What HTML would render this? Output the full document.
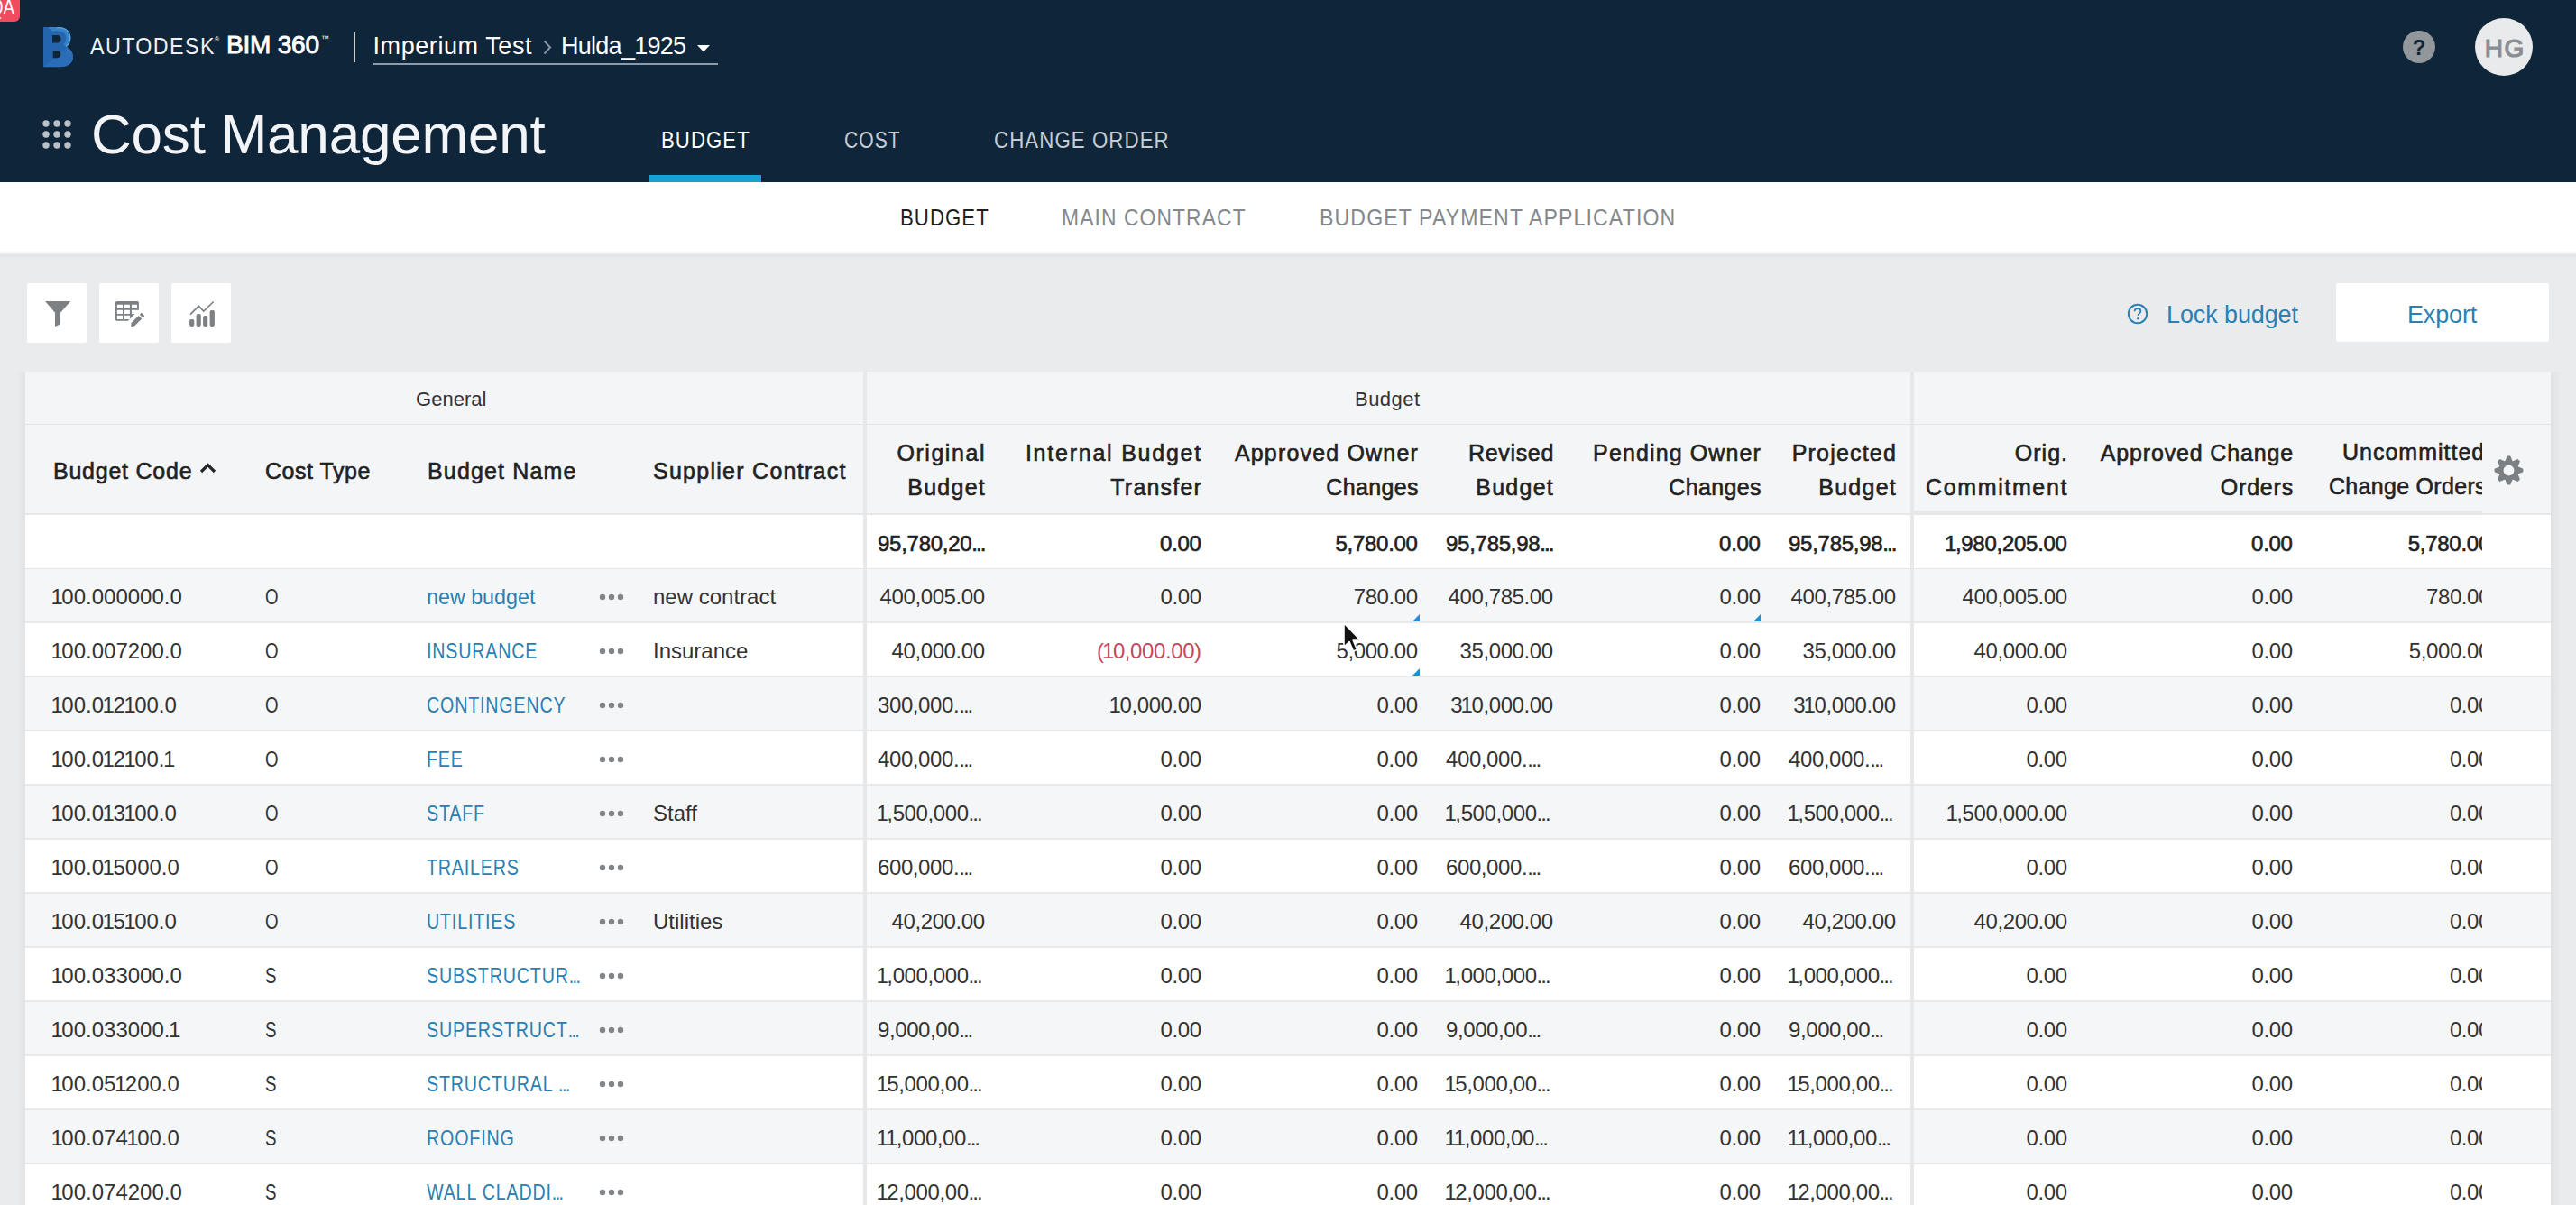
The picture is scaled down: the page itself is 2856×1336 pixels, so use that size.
<!DOCTYPE html>
<html><head><meta charset="utf-8">
<style>
html,body{margin:0;padding:0;}
body{width:2856px;height:1336px;overflow:hidden;position:relative;background:#e9ebed;font-family:"Liberation Sans",sans-serif;}
.t{position:absolute;line-height:1;white-space:nowrap;}
.r{position:absolute;}
svg{position:absolute;}
.o{margin-left:-1.5px;letter-spacing:-1.5px;}
.e{letter-spacing:-2.0px;}
.n{letter-spacing:-0.4px;}
.nb{letter-spacing:-0.27px;}
.sx{display:inline-block;transform-origin:0 0;}
</style></head><body>
<div class="r" style="left:0px;top:0px;width:2856px;height:202px;background:#0f2539;"></div>
<div class="r" style="left:0;top:0;width:22px;height:24px;background:#f24b60;border-bottom-right-radius:6px;overflow:hidden;"><div class="t" style="top:-4.02px;font-size:24px;color:#fff;left:-10.7px;"><span class="sx" style="transform:scaleX(0.78)">QA</span></div>
</div>
<svg style="left:47.9px;top:29.8px" width="34" height="45" viewBox="0 0 34 45">
<defs><clipPath id="bc"><path d="M0,0 H17 C25.5,0 30.4,5 30.4,12 C30.4,16.5 28.5,20 25.5,22 C30,24 33,28 33,33 C33,40 27.5,44.2 18.5,44.2 H0 Z"/></clipPath></defs>
<g clip-path="url(#bc)">
<rect x="0" y="0" width="34" height="45" fill="#2565ad"/>
<path d="M0,44.2 L26,23 L34,26 V45 Z" fill="#2b6db6"/>
<path d="M5,0 H17 C25.5,0 30.4,5 30.4,12 C30.4,16.5 28.5,20 25.5,22 L22,19.5 C24.5,17.5 25.5,15 25.5,12.5 C25.5,7.5 21.5,4.5 16,4.5 H10 C8,3 6.5,1.5 5,0 Z" fill="#3781c8"/>
<path d="M15,0 H17 C25.5,0 30.4,5 30.4,12 C30.4,16.5 28.5,20 25.5,22" fill="none" stroke="#58a5de" stroke-width="2.6"/>
</g>
<path fill="#0f2539" d="M10,9.1 H15.5 C18,9.1 19.5,10.8 19.5,13.2 C19.5,15.6 18,17.4 15.5,17.4 H10 Z M10.7,26.2 H15.3 C17.8,26.2 19.3,28 19.3,30.2 C19.3,32.4 17.8,34.2 15.3,34.2 H10.7 Z"/>
</svg>
<div class="t" style="top:37.99px;font-size:26px;color:#eef1f4;left:99.5px;"><span class="sx" style="transform:scaleX(0.8940);letter-spacing:1.6px">AUTODESK</span></div>
<div class="t" style="top:39.57px;font-size:7px;color:#fff;left:238px;">&reg;</div>
<div class="t" style="top:36.30px;font-size:28px;color:#fff;left:251px;-webkit-text-stroke:0.9px #fff;letter-spacing:-0.22px;">BIM 360</div>
<div class="t" style="top:39.38px;font-size:9px;color:#fff;left:356px;">&trade;</div>
<div class="r" style="left:392px;top:36px;width:2px;height:33px;background:#c8ced6;"></div>
<div class="t" style="top:38.14px;font-size:27px;color:#fff;left:413.5px;letter-spacing:0.58px;">Imperium Test</div>
<svg style="left:602px;top:44px" width="10" height="17" viewBox="0 0 10 17"><path d="M1.5,1.5 L8,8.5 L1.5,15.5" fill="none" stroke="#8794a4" stroke-width="2"/></svg>
<div class="t" style="top:38.14px;font-size:27px;color:#fff;left:622px;letter-spacing:-0.73px;">Hulda_1925</div>
<svg style="left:773px;top:50px" width="14" height="8" viewBox="0 0 14 8"><path d="M0,0 H14 L7,7.5 Z" fill="#fff"/></svg>
<div class="r" style="left:414px;top:70px;width:382px;height:2px;background:#8e9aa8;"></div>
<div class="r" style="left:2664px;top:34px;width:36px;height:36px;border-radius:50%;background:#92979c;"></div>
<div class="t" style="top:41.18px;font-size:24px;color:#0f2539;font-weight:700;left:2182px;width:1000px;text-align:center;">?</div>
<div class="r" style="left:2744px;top:20px;width:64px;height:64px;border-radius:50%;background:#e8eaec;"></div>
<div class="t" style="top:40.30px;font-size:28px;color:#8a8e92;left:2277.3px;width:1000px;text-align:center;letter-spacing:1.6px;-webkit-text-stroke:1.2px #8a8e92;">HG</div>
<svg style="left:47px;top:133px" width="34" height="34" viewBox="0 0 34 34"><circle cx="4" cy="4" r="3.7" fill="#b9c0c8"/><circle cx="4" cy="16" r="3.7" fill="#b9c0c8"/><circle cx="4" cy="28" r="3.7" fill="#b9c0c8"/><circle cx="16" cy="4" r="3.7" fill="#b9c0c8"/><circle cx="16" cy="16" r="3.7" fill="#b9c0c8"/><circle cx="16" cy="28" r="3.7" fill="#b9c0c8"/><circle cx="28" cy="4" r="3.7" fill="#b9c0c8"/><circle cx="28" cy="16" r="3.7" fill="#b9c0c8"/><circle cx="28" cy="28" r="3.7" fill="#b9c0c8"/></svg>
<div class="t" style="top:117.52px;font-size:62px;color:#f2f4f7;left:101px;letter-spacing:-0.21px;">Cost Management</div>
<div class="t" style="top:142.84px;font-size:25px;color:#fff;left:732.5px;"><span class="sx" style="transform:scaleX(0.8866);letter-spacing:1.2px">BUDGET</span></div>
<div class="t" style="top:142.84px;font-size:25px;color:#c5ccd3;left:935.5px;"><span class="sx" style="transform:scaleX(0.8452);letter-spacing:1.2px">COST</span></div>
<div class="t" style="top:142.84px;font-size:25px;color:#c5ccd3;left:1101.5px;"><span class="sx" style="transform:scaleX(0.8910);letter-spacing:1.2px">CHANGE ORDER</span></div>
<div class="r" style="left:720px;top:194px;width:124px;height:8px;background:#1b9ddc;"></div>
<div class="r" style="left:0px;top:202px;width:2856px;height:76px;background:#fff;"></div>
<div class="t" style="top:228.84px;font-size:25px;color:#1f1f1f;left:997.5px;"><span class="sx" style="transform:scaleX(0.8875);letter-spacing:1.2px">BUDGET</span></div>
<div class="t" style="top:228.84px;font-size:25px;color:#85898d;left:1177px;"><span class="sx" style="transform:scaleX(0.9142);letter-spacing:1.2px">MAIN CONTRACT</span></div>
<div class="t" style="top:228.84px;font-size:25px;color:#85898d;left:1463px;"><span class="sx" style="transform:scaleX(0.9245);letter-spacing:1.2px">BUDGET PAYMENT APPLICATION</span></div>
<div class="r" style="left:0px;top:278px;width:2856px;height:9px;background:linear-gradient(#fff,#e3e6e8 55%,#e9ebed);"></div>
<div class="r" style="left:30px;top:314px;width:66px;height:66px;background:#fff;border-radius:2px;"></div>
<div class="r" style="left:110px;top:314px;width:66px;height:66px;background:#fff;border-radius:2px;"></div>
<div class="r" style="left:190px;top:314px;width:66px;height:66px;background:#fff;border-radius:2px;"></div>
<svg style="left:50px;top:334px" width="29" height="28" viewBox="0 0 29 28"><path fill="#7d8184" d="M0,0 H28.2 L17,12.8 V25.4 L11,28 V12.8 Z"/></svg>
<svg style="left:128px;top:334px" width="34" height="30" viewBox="0 0 34 30">
<path fill="#7d8184" fill-rule="evenodd" d="M1.5,0 H24.4 A1.5,1.5 0 0 1 25.9,1.5 V9.8 H17.9 V14 H21.5 L13.9,21.7 H1.5 A1.5,1.5 0 0 1 0,20.2 V1.5 A1.5,1.5 0 0 1 1.5,0 Z M1.8,3.8 V8 H8 V3.8 Z M9.9,3.8 V8 H15.9 V3.8 Z M17.9,3.8 V8 H24 V3.8 Z M1.8,9.8 V14 H8 V9.8 Z M9.9,9.8 V14 H15.9 V9.8 Z M1.8,15.7 V19.9 H8 V15.7 Z M9.9,15.7 V19.9 H15.7 L15.9,19.7 V15.7 Z"/>
<path fill="#7d8184" d="M17.2,27.9 L17.53,24.03 L25.68,15.88 L29.22,19.42 L21.07,27.57 Z M26.73,14.83 L28.83,12.73 L32.37,16.27 L30.27,18.37 Z"/>
</svg>
<svg style="left:209px;top:333px" width="30" height="30" viewBox="0 0 30 30">
<polyline points="2,15.6 11.3,6.3 16.8,12.1 27.7,1.5" fill="none" stroke="#7d8184" stroke-width="1.7"/>
<rect x="1.1" y="20.9" width="5.2" height="8" rx="1.8" fill="#7d8184"/>
<rect x="8.6" y="15.1" width="5.2" height="13.8" rx="1.8" fill="#7d8184"/>
<rect x="16.1" y="17.1" width="5.1" height="11.8" rx="1.8" fill="#7d8184"/>
<rect x="23.6" y="11.1" width="5.3" height="17.8" rx="1.8" fill="#7d8184"/>
</svg>
<svg style="left:2358px;top:336px" width="24" height="24" viewBox="0 0 24 24"><circle cx="12" cy="12" r="10.2" fill="none" stroke="#2a80b3" stroke-width="1.9"/><path d="M8.6,9.3 C8.6,7.2 10.1,6 12,6 C14,6 15.4,7.2 15.4,9 C15.4,11.2 12.5,11.5 12.5,14" fill="none" stroke="#2a80b3" stroke-width="1.8"/><circle cx="12.4" cy="17.3" r="1.2" fill="#2a80b3"/></svg>
<div class="t" style="top:335.64px;font-size:27px;color:#2a80b3;left:2402px;letter-spacing:-0.11px;">Lock budget</div>
<div class="r" style="left:2590px;top:314px;width:236px;height:65px;background:#fff;border-radius:2px;"></div>
<div class="t" style="top:335.64px;font-size:27px;color:#2a80b3;left:2669px;letter-spacing:-0.14px;">Export</div>
<div class="r" style="left:20px;top:412px;width:8px;height:924px;background:linear-gradient(90deg,rgba(226,228,230,0.2),#e2e4e6);"></div>
<div class="r" style="left:2828px;top:412px;width:10px;height:924px;background:linear-gradient(90deg,#e0e2e4,rgba(226,228,230,0.3));"></div>
<div class="r" style="left:28px;top:412px;width:2800px;height:159px;background:#f4f5f6;"></div>
<div class="r" style="left:28px;top:470px;width:2800px;height:1px;background:#e3e5e7;"></div>
<div class="r" style="left:28px;top:569px;width:2800px;height:2px;background:#e4e6e8;"></div>
<div class="r" style="left:2122px;top:566px;width:630px;height:4px;background:#e6e8ea;"></div>
<div class="r" style="left:28px;top:571px;width:2800px;height:59px;background:#fff;"></div>
<div class="r" style="left:28px;top:630px;width:2800px;height:1px;background:#e3e5e7;"></div>
<div class="r" style="left:28px;top:631px;width:2800px;height:59px;background:#f5f6f7;"></div>
<div class="r" style="left:28px;top:689px;width:2800px;height:2px;background:#e8e9eb;"></div>
<div class="r" style="left:28px;top:691px;width:2800px;height:59px;background:#fff;"></div>
<div class="r" style="left:28px;top:749px;width:2800px;height:2px;background:#e8e9eb;"></div>
<div class="r" style="left:28px;top:751px;width:2800px;height:59px;background:#f5f6f7;"></div>
<div class="r" style="left:28px;top:809px;width:2800px;height:2px;background:#e8e9eb;"></div>
<div class="r" style="left:28px;top:811px;width:2800px;height:59px;background:#fff;"></div>
<div class="r" style="left:28px;top:869px;width:2800px;height:2px;background:#e8e9eb;"></div>
<div class="r" style="left:28px;top:871px;width:2800px;height:59px;background:#f5f6f7;"></div>
<div class="r" style="left:28px;top:929px;width:2800px;height:2px;background:#e8e9eb;"></div>
<div class="r" style="left:28px;top:931px;width:2800px;height:59px;background:#fff;"></div>
<div class="r" style="left:28px;top:989px;width:2800px;height:2px;background:#e8e9eb;"></div>
<div class="r" style="left:28px;top:991px;width:2800px;height:59px;background:#f5f6f7;"></div>
<div class="r" style="left:28px;top:1049px;width:2800px;height:2px;background:#e8e9eb;"></div>
<div class="r" style="left:28px;top:1051px;width:2800px;height:59px;background:#fff;"></div>
<div class="r" style="left:28px;top:1109px;width:2800px;height:2px;background:#e8e9eb;"></div>
<div class="r" style="left:28px;top:1111px;width:2800px;height:59px;background:#f5f6f7;"></div>
<div class="r" style="left:28px;top:1169px;width:2800px;height:2px;background:#e8e9eb;"></div>
<div class="r" style="left:28px;top:1171px;width:2800px;height:59px;background:#fff;"></div>
<div class="r" style="left:28px;top:1229px;width:2800px;height:2px;background:#e8e9eb;"></div>
<div class="r" style="left:28px;top:1231px;width:2800px;height:59px;background:#f5f6f7;"></div>
<div class="r" style="left:28px;top:1289px;width:2800px;height:2px;background:#e8e9eb;"></div>
<div class="r" style="left:28px;top:1291px;width:2800px;height:59px;background:#fff;"></div>
<div class="r" style="left:28px;top:1349px;width:2800px;height:2px;background:#e8e9eb;"></div>
<div class="r" style="left:957px;top:412px;width:4px;height:924px;background:#e6e8ea;"></div>
<div class="r" style="left:2118px;top:412px;width:4px;height:924px;background:#e6e8ea;"></div>
<div class="t" style="top:432.38px;font-size:22px;color:#333333;left:461px;letter-spacing:0.02px;">General</div>
<div class="t" style="top:432.38px;font-size:22px;color:#333333;left:1502px;letter-spacing:0.46px;">Budget</div>
<div class="t" style="top:509.84px;font-size:25px;color:#222222;-webkit-text-stroke:0.6px #222222;left:59px;letter-spacing:0.76px;">Budget Code</div>
<svg style="left:221px;top:513px" width="19" height="12" viewBox="0 0 19 12"><path d="M2,10 L9.5,2.5 L17,10" fill="none" stroke="#262626" stroke-width="3.2"/></svg>
<div class="t" style="top:509.84px;font-size:25px;color:#222222;-webkit-text-stroke:0.6px #222222;left:294px;letter-spacing:0.54px;">Cost Type</div>
<div class="t" style="top:509.84px;font-size:25px;color:#222222;-webkit-text-stroke:0.6px #222222;left:474px;letter-spacing:1.15px;">Budget Name</div>
<div class="t" style="top:509.84px;font-size:25px;color:#222222;-webkit-text-stroke:0.6px #222222;left:724px;letter-spacing:1.27px;">Supplier Contract</div>
<div class="t" style="top:489.84px;font-size:25px;color:#222222;-webkit-text-stroke:0.6px #222222;right:1763px;text-align:right;letter-spacing:1.56px;">Original</div>
<div class="t" style="top:527.84px;font-size:25px;color:#222222;-webkit-text-stroke:0.6px #222222;right:1763px;text-align:right;letter-spacing:1.24px;">Budget</div>
<div class="t" style="top:489.84px;font-size:25px;color:#222222;-webkit-text-stroke:0.6px #222222;right:1523px;text-align:right;letter-spacing:1.77px;">Internal Budget</div>
<div class="t" style="top:527.84px;font-size:25px;color:#222222;-webkit-text-stroke:0.6px #222222;right:1523px;text-align:right;letter-spacing:1.19px;">Transfer</div>
<div class="t" style="top:489.84px;font-size:25px;color:#222222;-webkit-text-stroke:0.6px #222222;right:1283px;text-align:right;letter-spacing:1.18px;">Approved Owner</div>
<div class="t" style="top:527.84px;font-size:25px;color:#222222;-webkit-text-stroke:0.6px #222222;right:1283px;text-align:right;letter-spacing:0.38px;">Changes</div>
<div class="t" style="top:489.84px;font-size:25px;color:#222222;-webkit-text-stroke:0.6px #222222;right:1133px;text-align:right;letter-spacing:0.68px;">Revised</div>
<div class="t" style="top:527.84px;font-size:25px;color:#222222;-webkit-text-stroke:0.6px #222222;right:1133px;text-align:right;letter-spacing:1.24px;">Budget</div>
<div class="t" style="top:489.84px;font-size:25px;color:#222222;-webkit-text-stroke:0.6px #222222;right:903px;text-align:right;letter-spacing:1.12px;">Pending Owner</div>
<div class="t" style="top:527.84px;font-size:25px;color:#222222;-webkit-text-stroke:0.6px #222222;right:903px;text-align:right;letter-spacing:0.38px;">Changes</div>
<div class="t" style="top:489.84px;font-size:25px;color:#222222;-webkit-text-stroke:0.6px #222222;right:753px;text-align:right;letter-spacing:1.19px;">Projected</div>
<div class="t" style="top:527.84px;font-size:25px;color:#222222;-webkit-text-stroke:0.6px #222222;right:753px;text-align:right;letter-spacing:1.24px;">Budget</div>
<div class="t" style="top:489.84px;font-size:25px;color:#222222;-webkit-text-stroke:0.6px #222222;right:563px;text-align:right;letter-spacing:1.00px;">Orig.</div>
<div class="t" style="top:527.84px;font-size:25px;color:#222222;-webkit-text-stroke:0.6px #222222;right:563px;text-align:right;letter-spacing:1.63px;">Commitment</div>
<div class="t" style="top:489.84px;font-size:25px;color:#222222;-webkit-text-stroke:0.6px #222222;right:313px;text-align:right;letter-spacing:0.85px;">Approved Change</div>
<div class="t" style="top:527.84px;font-size:25px;color:#222222;-webkit-text-stroke:0.6px #222222;right:313px;text-align:right;letter-spacing:0.80px;">Orders</div>
<div class="r" style="left:2560px;top:471px;width:192px;height:95px;overflow:hidden;"><div class="t" style="top:18.34px;font-size:25px;color:#222222;-webkit-text-stroke:0.6px #222222;left:37px;letter-spacing:1.0px;">Uncommitted</div>
<div class="t" style="top:56.34px;font-size:25px;color:#222222;-webkit-text-stroke:0.6px #222222;left:22px;letter-spacing:0.3px;">Change Orders</div>
</div>
<svg style="left:2765px;top:505px" width="33" height="33" viewBox="0 0 33 33"><path fill="#7b8085" fill-rule="evenodd" d="M12.52,5.92 L14.74,0.60 L18.26,0.60 L20.48,5.92 L21.16,6.21 L26.50,4.01 L28.99,6.50 L26.79,11.84 L27.08,12.52 L32.40,14.74 L32.40,18.26 L27.08,20.48 L26.79,21.16 L28.99,26.50 L26.50,28.99 L21.16,26.79 L20.48,27.08 L18.26,32.40 L14.74,32.40 L12.52,27.08 L11.84,26.79 L6.50,28.99 L4.01,26.50 L6.21,21.16 L5.92,20.48 L0.60,18.26 L0.60,14.74 L5.92,12.52 L6.21,11.84 L4.01,6.50 L6.50,4.01 L11.84,6.21 Z M16.5,10.6 A5.9,5.9 0 1 0 16.51,10.6 Z"/></svg>
<div class="t" style="top:591.28px;font-size:24px;color:#222222;-webkit-text-stroke:0.6px #222222;left:973px;"><span class="nb">95,780,20<span class="e">...</span></span></div>
<div class="t" style="top:591.28px;font-size:24px;color:#222222;-webkit-text-stroke:0.6px #222222;right:1524.3px;text-align:right;"><span class="nb">0.00</span></div>
<div class="t" style="top:591.28px;font-size:24px;color:#222222;-webkit-text-stroke:0.6px #222222;right:1284.3px;text-align:right;"><span class="nb">5,780.00</span></div>
<div class="t" style="top:591.28px;font-size:24px;color:#222222;-webkit-text-stroke:0.6px #222222;left:1603px;"><span class="nb">95,785,98<span class="e">...</span></span></div>
<div class="t" style="top:591.28px;font-size:24px;color:#222222;-webkit-text-stroke:0.6px #222222;right:904.3px;text-align:right;"><span class="nb">0.00</span></div>
<div class="t" style="top:591.28px;font-size:24px;color:#222222;-webkit-text-stroke:0.6px #222222;left:1983px;"><span class="nb">95,785,98<span class="e">...</span></span></div>
<div class="t" style="top:591.28px;font-size:24px;color:#222222;-webkit-text-stroke:0.6px #222222;right:564.3000000000002px;text-align:right;"><span class="nb"><span class="o">1</span>,980,205.00</span></div>
<div class="t" style="top:591.28px;font-size:24px;color:#222222;-webkit-text-stroke:0.6px #222222;right:314.3000000000002px;text-align:right;"><span class="nb">0.00</span></div>
<div class="r" style="left:2600px;top:571.6px;width:152px;height:50px;overflow:hidden;"><div class="t" style="top:19.68px;font-size:24px;color:#222222;-webkit-text-stroke:0.6px #222222;left:0px;left:auto;right:-9px;"><span class="nb">5,780.00</span></div>
</div>
<div class="t" style="top:650.08px;font-size:24px;color:#333333;left:58px;"><span class="o">1</span>00.000000.0</div>
<div class="t" style="top:650.08px;font-size:24px;color:#333333;left:294px;"><span class="sx" style="transform:scaleX(0.78)">O</span></div>
<div class="t" style="top:650.08px;font-size:24px;color:#2a80b3;left:473px;"><span class="sx" style="transform:scaleX(0.97);letter-spacing:0px">new budget</span></div>
<svg style="left:664px;top:658px" width="28" height="8" viewBox="0 0 28 8"><circle cx="4" cy="4" r="3.2" fill="#808487"/><circle cx="14" cy="4" r="3.2" fill="#808487"/><circle cx="24" cy="4" r="3.2" fill="#808487"/></svg>
<div class="t" style="top:650.08px;font-size:24px;color:#333333;left:724px;">new contract</div>
<div class="t" style="top:650.08px;font-size:24px;color:#333333;right:1764.3px;text-align:right;"><span class="n">400,005.00</span></div>
<div class="t" style="top:650.08px;font-size:24px;color:#333333;right:1524.3px;text-align:right;"><span class="n">0.00</span></div>
<div class="t" style="top:650.08px;font-size:24px;color:#333333;right:1284.3px;text-align:right;"><span class="n">780.00</span></div>
<div class="t" style="top:650.08px;font-size:24px;color:#333333;right:1134.3px;text-align:right;"><span class="n">400,785.00</span></div>
<div class="t" style="top:650.08px;font-size:24px;color:#333333;right:904.3px;text-align:right;"><span class="n">0.00</span></div>
<div class="t" style="top:650.08px;font-size:24px;color:#333333;right:754.3000000000002px;text-align:right;"><span class="n">400,785.00</span></div>
<div class="t" style="top:650.08px;font-size:24px;color:#333333;right:564.3000000000002px;text-align:right;"><span class="n">400,005.00</span></div>
<div class="t" style="top:650.08px;font-size:24px;color:#333333;right:314.3000000000002px;text-align:right;"><span class="n">0.00</span></div>
<div class="r" style="left:2600px;top:630.4px;width:152px;height:50px;overflow:hidden;"><div class="t" style="top:19.68px;font-size:24px;color:#333333;left:0px;left:auto;right:-9px;"><span class="n">780.00</span></div>
</div>
<div class="t" style="top:710.08px;font-size:24px;color:#333333;left:58px;"><span class="o">1</span>00.007200.0</div>
<div class="t" style="top:710.08px;font-size:24px;color:#333333;left:294px;"><span class="sx" style="transform:scaleX(0.78)">O</span></div>
<div class="t" style="top:710.08px;font-size:24px;color:#2a80b3;left:473px;"><span class="sx" style="transform:scaleX(0.82);letter-spacing:1px">INSURANCE</span></div>
<svg style="left:664px;top:718px" width="28" height="8" viewBox="0 0 28 8"><circle cx="4" cy="4" r="3.2" fill="#808487"/><circle cx="14" cy="4" r="3.2" fill="#808487"/><circle cx="24" cy="4" r="3.2" fill="#808487"/></svg>
<div class="t" style="top:710.08px;font-size:24px;color:#333333;left:724px;">Insurance</div>
<div class="t" style="top:710.08px;font-size:24px;color:#333333;right:1764.3px;text-align:right;"><span class="n">40,000.00</span></div>
<div class="t" style="top:710.08px;font-size:24px;color:#c24a5f;right:1524.3px;text-align:right;"><span class="n">(<span class="o">1</span>0,000.00)</span></div>
<div class="t" style="top:710.08px;font-size:24px;color:#333333;right:1284.3px;text-align:right;"><span class="n">5,000.00</span></div>
<div class="t" style="top:710.08px;font-size:24px;color:#333333;right:1134.3px;text-align:right;"><span class="n">35,000.00</span></div>
<div class="t" style="top:710.08px;font-size:24px;color:#333333;right:904.3px;text-align:right;"><span class="n">0.00</span></div>
<div class="t" style="top:710.08px;font-size:24px;color:#333333;right:754.3000000000002px;text-align:right;"><span class="n">35,000.00</span></div>
<div class="t" style="top:710.08px;font-size:24px;color:#333333;right:564.3000000000002px;text-align:right;"><span class="n">40,000.00</span></div>
<div class="t" style="top:710.08px;font-size:24px;color:#333333;right:314.3000000000002px;text-align:right;"><span class="n">0.00</span></div>
<div class="r" style="left:2600px;top:690.4px;width:152px;height:50px;overflow:hidden;"><div class="t" style="top:19.68px;font-size:24px;color:#333333;left:0px;left:auto;right:-9px;"><span class="n">5,000.00</span></div>
</div>
<div class="t" style="top:770.08px;font-size:24px;color:#333333;left:58px;"><span class="o">1</span>00.0<span class="o">1</span>2<span class="o">1</span>00.0</div>
<div class="t" style="top:770.08px;font-size:24px;color:#333333;left:294px;"><span class="sx" style="transform:scaleX(0.78)">O</span></div>
<div class="t" style="top:770.08px;font-size:24px;color:#2a80b3;left:473px;"><span class="sx" style="transform:scaleX(0.82);letter-spacing:1px">CONTINGENCY</span></div>
<svg style="left:664px;top:778px" width="28" height="8" viewBox="0 0 28 8"><circle cx="4" cy="4" r="3.2" fill="#808487"/><circle cx="14" cy="4" r="3.2" fill="#808487"/><circle cx="24" cy="4" r="3.2" fill="#808487"/></svg>
<div class="t" style="top:770.08px;font-size:24px;color:#333333;left:973px;"><span class="n">300,000.<span class="e">...</span></span></div>
<div class="t" style="top:770.08px;font-size:24px;color:#333333;right:1524.3px;text-align:right;"><span class="n"><span class="o">1</span>0,000.00</span></div>
<div class="t" style="top:770.08px;font-size:24px;color:#333333;right:1284.3px;text-align:right;"><span class="n">0.00</span></div>
<div class="t" style="top:770.08px;font-size:24px;color:#333333;right:1134.3px;text-align:right;"><span class="n">3<span class="o">1</span>0,000.00</span></div>
<div class="t" style="top:770.08px;font-size:24px;color:#333333;right:904.3px;text-align:right;"><span class="n">0.00</span></div>
<div class="t" style="top:770.08px;font-size:24px;color:#333333;right:754.3000000000002px;text-align:right;"><span class="n">3<span class="o">1</span>0,000.00</span></div>
<div class="t" style="top:770.08px;font-size:24px;color:#333333;right:564.3000000000002px;text-align:right;"><span class="n">0.00</span></div>
<div class="t" style="top:770.08px;font-size:24px;color:#333333;right:314.3000000000002px;text-align:right;"><span class="n">0.00</span></div>
<div class="r" style="left:2600px;top:750.4px;width:152px;height:50px;overflow:hidden;"><div class="t" style="top:19.68px;font-size:24px;color:#333333;left:0px;left:auto;right:-9px;"><span class="n">0.00</span></div>
</div>
<div class="t" style="top:830.08px;font-size:24px;color:#333333;left:58px;"><span class="o">1</span>00.0<span class="o">1</span>2<span class="o">1</span>00.<span class="o">1</span></div>
<div class="t" style="top:830.08px;font-size:24px;color:#333333;left:294px;"><span class="sx" style="transform:scaleX(0.78)">O</span></div>
<div class="t" style="top:830.08px;font-size:24px;color:#2a80b3;left:473px;"><span class="sx" style="transform:scaleX(0.82);letter-spacing:1px">FEE</span></div>
<svg style="left:664px;top:838px" width="28" height="8" viewBox="0 0 28 8"><circle cx="4" cy="4" r="3.2" fill="#808487"/><circle cx="14" cy="4" r="3.2" fill="#808487"/><circle cx="24" cy="4" r="3.2" fill="#808487"/></svg>
<div class="t" style="top:830.08px;font-size:24px;color:#333333;left:973px;"><span class="n">400,000.<span class="e">...</span></span></div>
<div class="t" style="top:830.08px;font-size:24px;color:#333333;right:1524.3px;text-align:right;"><span class="n">0.00</span></div>
<div class="t" style="top:830.08px;font-size:24px;color:#333333;right:1284.3px;text-align:right;"><span class="n">0.00</span></div>
<div class="t" style="top:830.08px;font-size:24px;color:#333333;left:1603px;"><span class="n">400,000.<span class="e">...</span></span></div>
<div class="t" style="top:830.08px;font-size:24px;color:#333333;right:904.3px;text-align:right;"><span class="n">0.00</span></div>
<div class="t" style="top:830.08px;font-size:24px;color:#333333;left:1983px;"><span class="n">400,000.<span class="e">...</span></span></div>
<div class="t" style="top:830.08px;font-size:24px;color:#333333;right:564.3000000000002px;text-align:right;"><span class="n">0.00</span></div>
<div class="t" style="top:830.08px;font-size:24px;color:#333333;right:314.3000000000002px;text-align:right;"><span class="n">0.00</span></div>
<div class="r" style="left:2600px;top:810.4px;width:152px;height:50px;overflow:hidden;"><div class="t" style="top:19.68px;font-size:24px;color:#333333;left:0px;left:auto;right:-9px;"><span class="n">0.00</span></div>
</div>
<div class="t" style="top:890.08px;font-size:24px;color:#333333;left:58px;"><span class="o">1</span>00.0<span class="o">1</span>3<span class="o">1</span>00.0</div>
<div class="t" style="top:890.08px;font-size:24px;color:#333333;left:294px;"><span class="sx" style="transform:scaleX(0.78)">O</span></div>
<div class="t" style="top:890.08px;font-size:24px;color:#2a80b3;left:473px;"><span class="sx" style="transform:scaleX(0.82);letter-spacing:1px">STAFF</span></div>
<svg style="left:664px;top:898px" width="28" height="8" viewBox="0 0 28 8"><circle cx="4" cy="4" r="3.2" fill="#808487"/><circle cx="14" cy="4" r="3.2" fill="#808487"/><circle cx="24" cy="4" r="3.2" fill="#808487"/></svg>
<div class="t" style="top:890.08px;font-size:24px;color:#333333;left:724px;">Staff</div>
<div class="t" style="top:890.08px;font-size:24px;color:#333333;left:973px;"><span class="n"><span class="o">1</span>,500,000<span class="e">...</span></span></div>
<div class="t" style="top:890.08px;font-size:24px;color:#333333;right:1524.3px;text-align:right;"><span class="n">0.00</span></div>
<div class="t" style="top:890.08px;font-size:24px;color:#333333;right:1284.3px;text-align:right;"><span class="n">0.00</span></div>
<div class="t" style="top:890.08px;font-size:24px;color:#333333;left:1603px;"><span class="n"><span class="o">1</span>,500,000<span class="e">...</span></span></div>
<div class="t" style="top:890.08px;font-size:24px;color:#333333;right:904.3px;text-align:right;"><span class="n">0.00</span></div>
<div class="t" style="top:890.08px;font-size:24px;color:#333333;left:1983px;"><span class="n"><span class="o">1</span>,500,000<span class="e">...</span></span></div>
<div class="t" style="top:890.08px;font-size:24px;color:#333333;right:564.3000000000002px;text-align:right;"><span class="n"><span class="o">1</span>,500,000.00</span></div>
<div class="t" style="top:890.08px;font-size:24px;color:#333333;right:314.3000000000002px;text-align:right;"><span class="n">0.00</span></div>
<div class="r" style="left:2600px;top:870.4px;width:152px;height:50px;overflow:hidden;"><div class="t" style="top:19.68px;font-size:24px;color:#333333;left:0px;left:auto;right:-9px;"><span class="n">0.00</span></div>
</div>
<div class="t" style="top:950.08px;font-size:24px;color:#333333;left:58px;"><span class="o">1</span>00.0<span class="o">1</span>5000.0</div>
<div class="t" style="top:950.08px;font-size:24px;color:#333333;left:294px;"><span class="sx" style="transform:scaleX(0.78)">O</span></div>
<div class="t" style="top:950.08px;font-size:24px;color:#2a80b3;left:473px;"><span class="sx" style="transform:scaleX(0.82);letter-spacing:1px">TRAILERS</span></div>
<svg style="left:664px;top:958px" width="28" height="8" viewBox="0 0 28 8"><circle cx="4" cy="4" r="3.2" fill="#808487"/><circle cx="14" cy="4" r="3.2" fill="#808487"/><circle cx="24" cy="4" r="3.2" fill="#808487"/></svg>
<div class="t" style="top:950.08px;font-size:24px;color:#333333;left:973px;"><span class="n">600,000.<span class="e">...</span></span></div>
<div class="t" style="top:950.08px;font-size:24px;color:#333333;right:1524.3px;text-align:right;"><span class="n">0.00</span></div>
<div class="t" style="top:950.08px;font-size:24px;color:#333333;right:1284.3px;text-align:right;"><span class="n">0.00</span></div>
<div class="t" style="top:950.08px;font-size:24px;color:#333333;left:1603px;"><span class="n">600,000.<span class="e">...</span></span></div>
<div class="t" style="top:950.08px;font-size:24px;color:#333333;right:904.3px;text-align:right;"><span class="n">0.00</span></div>
<div class="t" style="top:950.08px;font-size:24px;color:#333333;left:1983px;"><span class="n">600,000.<span class="e">...</span></span></div>
<div class="t" style="top:950.08px;font-size:24px;color:#333333;right:564.3000000000002px;text-align:right;"><span class="n">0.00</span></div>
<div class="t" style="top:950.08px;font-size:24px;color:#333333;right:314.3000000000002px;text-align:right;"><span class="n">0.00</span></div>
<div class="r" style="left:2600px;top:930.4px;width:152px;height:50px;overflow:hidden;"><div class="t" style="top:19.68px;font-size:24px;color:#333333;left:0px;left:auto;right:-9px;"><span class="n">0.00</span></div>
</div>
<div class="t" style="top:1010.08px;font-size:24px;color:#333333;left:58px;"><span class="o">1</span>00.0<span class="o">1</span>5<span class="o">1</span>00.0</div>
<div class="t" style="top:1010.08px;font-size:24px;color:#333333;left:294px;"><span class="sx" style="transform:scaleX(0.78)">O</span></div>
<div class="t" style="top:1010.08px;font-size:24px;color:#2a80b3;left:473px;"><span class="sx" style="transform:scaleX(0.82);letter-spacing:1px">UTILITIES</span></div>
<svg style="left:664px;top:1018px" width="28" height="8" viewBox="0 0 28 8"><circle cx="4" cy="4" r="3.2" fill="#808487"/><circle cx="14" cy="4" r="3.2" fill="#808487"/><circle cx="24" cy="4" r="3.2" fill="#808487"/></svg>
<div class="t" style="top:1010.08px;font-size:24px;color:#333333;left:724px;">Utilities</div>
<div class="t" style="top:1010.08px;font-size:24px;color:#333333;right:1764.3px;text-align:right;"><span class="n">40,200.00</span></div>
<div class="t" style="top:1010.08px;font-size:24px;color:#333333;right:1524.3px;text-align:right;"><span class="n">0.00</span></div>
<div class="t" style="top:1010.08px;font-size:24px;color:#333333;right:1284.3px;text-align:right;"><span class="n">0.00</span></div>
<div class="t" style="top:1010.08px;font-size:24px;color:#333333;right:1134.3px;text-align:right;"><span class="n">40,200.00</span></div>
<div class="t" style="top:1010.08px;font-size:24px;color:#333333;right:904.3px;text-align:right;"><span class="n">0.00</span></div>
<div class="t" style="top:1010.08px;font-size:24px;color:#333333;right:754.3000000000002px;text-align:right;"><span class="n">40,200.00</span></div>
<div class="t" style="top:1010.08px;font-size:24px;color:#333333;right:564.3000000000002px;text-align:right;"><span class="n">40,200.00</span></div>
<div class="t" style="top:1010.08px;font-size:24px;color:#333333;right:314.3000000000002px;text-align:right;"><span class="n">0.00</span></div>
<div class="r" style="left:2600px;top:990.4000000000001px;width:152px;height:50px;overflow:hidden;"><div class="t" style="top:19.68px;font-size:24px;color:#333333;left:0px;left:auto;right:-9px;"><span class="n">0.00</span></div>
</div>
<div class="t" style="top:1070.08px;font-size:24px;color:#333333;left:58px;"><span class="o">1</span>00.033000.0</div>
<div class="t" style="top:1070.08px;font-size:24px;color:#333333;left:294px;"><span class="sx" style="transform:scaleX(0.78)">S</span></div>
<div class="t" style="top:1070.08px;font-size:24px;color:#2a80b3;left:473px;"><span class="sx" style="transform:scaleX(0.82);letter-spacing:1px">SUBSTRUCTUR<span class="e">...</span></span></div>
<svg style="left:664px;top:1078px" width="28" height="8" viewBox="0 0 28 8"><circle cx="4" cy="4" r="3.2" fill="#808487"/><circle cx="14" cy="4" r="3.2" fill="#808487"/><circle cx="24" cy="4" r="3.2" fill="#808487"/></svg>
<div class="t" style="top:1070.08px;font-size:24px;color:#333333;left:973px;"><span class="n"><span class="o">1</span>,000,000<span class="e">...</span></span></div>
<div class="t" style="top:1070.08px;font-size:24px;color:#333333;right:1524.3px;text-align:right;"><span class="n">0.00</span></div>
<div class="t" style="top:1070.08px;font-size:24px;color:#333333;right:1284.3px;text-align:right;"><span class="n">0.00</span></div>
<div class="t" style="top:1070.08px;font-size:24px;color:#333333;left:1603px;"><span class="n"><span class="o">1</span>,000,000<span class="e">...</span></span></div>
<div class="t" style="top:1070.08px;font-size:24px;color:#333333;right:904.3px;text-align:right;"><span class="n">0.00</span></div>
<div class="t" style="top:1070.08px;font-size:24px;color:#333333;left:1983px;"><span class="n"><span class="o">1</span>,000,000<span class="e">...</span></span></div>
<div class="t" style="top:1070.08px;font-size:24px;color:#333333;right:564.3000000000002px;text-align:right;"><span class="n">0.00</span></div>
<div class="t" style="top:1070.08px;font-size:24px;color:#333333;right:314.3000000000002px;text-align:right;"><span class="n">0.00</span></div>
<div class="r" style="left:2600px;top:1050.4px;width:152px;height:50px;overflow:hidden;"><div class="t" style="top:19.68px;font-size:24px;color:#333333;left:0px;left:auto;right:-9px;"><span class="n">0.00</span></div>
</div>
<div class="t" style="top:1130.08px;font-size:24px;color:#333333;left:58px;"><span class="o">1</span>00.033000.<span class="o">1</span></div>
<div class="t" style="top:1130.08px;font-size:24px;color:#333333;left:294px;"><span class="sx" style="transform:scaleX(0.78)">S</span></div>
<div class="t" style="top:1130.08px;font-size:24px;color:#2a80b3;left:473px;"><span class="sx" style="transform:scaleX(0.82);letter-spacing:1px">SUPERSTRUCT<span class="e">...</span></span></div>
<svg style="left:664px;top:1138px" width="28" height="8" viewBox="0 0 28 8"><circle cx="4" cy="4" r="3.2" fill="#808487"/><circle cx="14" cy="4" r="3.2" fill="#808487"/><circle cx="24" cy="4" r="3.2" fill="#808487"/></svg>
<div class="t" style="top:1130.08px;font-size:24px;color:#333333;left:973px;"><span class="n">9,000,00<span class="e">...</span></span></div>
<div class="t" style="top:1130.08px;font-size:24px;color:#333333;right:1524.3px;text-align:right;"><span class="n">0.00</span></div>
<div class="t" style="top:1130.08px;font-size:24px;color:#333333;right:1284.3px;text-align:right;"><span class="n">0.00</span></div>
<div class="t" style="top:1130.08px;font-size:24px;color:#333333;left:1603px;"><span class="n">9,000,00<span class="e">...</span></span></div>
<div class="t" style="top:1130.08px;font-size:24px;color:#333333;right:904.3px;text-align:right;"><span class="n">0.00</span></div>
<div class="t" style="top:1130.08px;font-size:24px;color:#333333;left:1983px;"><span class="n">9,000,00<span class="e">...</span></span></div>
<div class="t" style="top:1130.08px;font-size:24px;color:#333333;right:564.3000000000002px;text-align:right;"><span class="n">0.00</span></div>
<div class="t" style="top:1130.08px;font-size:24px;color:#333333;right:314.3000000000002px;text-align:right;"><span class="n">0.00</span></div>
<div class="r" style="left:2600px;top:1110.4px;width:152px;height:50px;overflow:hidden;"><div class="t" style="top:19.68px;font-size:24px;color:#333333;left:0px;left:auto;right:-9px;"><span class="n">0.00</span></div>
</div>
<div class="t" style="top:1190.08px;font-size:24px;color:#333333;left:58px;"><span class="o">1</span>00.05<span class="o">1</span>200.0</div>
<div class="t" style="top:1190.08px;font-size:24px;color:#333333;left:294px;"><span class="sx" style="transform:scaleX(0.78)">S</span></div>
<div class="t" style="top:1190.08px;font-size:24px;color:#2a80b3;left:473px;"><span class="sx" style="transform:scaleX(0.82);letter-spacing:1px">STRUCTURAL <span class="e">...</span></span></div>
<svg style="left:664px;top:1198px" width="28" height="8" viewBox="0 0 28 8"><circle cx="4" cy="4" r="3.2" fill="#808487"/><circle cx="14" cy="4" r="3.2" fill="#808487"/><circle cx="24" cy="4" r="3.2" fill="#808487"/></svg>
<div class="t" style="top:1190.08px;font-size:24px;color:#333333;left:973px;"><span class="n"><span class="o">1</span>5,000,00<span class="e">...</span></span></div>
<div class="t" style="top:1190.08px;font-size:24px;color:#333333;right:1524.3px;text-align:right;"><span class="n">0.00</span></div>
<div class="t" style="top:1190.08px;font-size:24px;color:#333333;right:1284.3px;text-align:right;"><span class="n">0.00</span></div>
<div class="t" style="top:1190.08px;font-size:24px;color:#333333;left:1603px;"><span class="n"><span class="o">1</span>5,000,00<span class="e">...</span></span></div>
<div class="t" style="top:1190.08px;font-size:24px;color:#333333;right:904.3px;text-align:right;"><span class="n">0.00</span></div>
<div class="t" style="top:1190.08px;font-size:24px;color:#333333;left:1983px;"><span class="n"><span class="o">1</span>5,000,00<span class="e">...</span></span></div>
<div class="t" style="top:1190.08px;font-size:24px;color:#333333;right:564.3000000000002px;text-align:right;"><span class="n">0.00</span></div>
<div class="t" style="top:1190.08px;font-size:24px;color:#333333;right:314.3000000000002px;text-align:right;"><span class="n">0.00</span></div>
<div class="r" style="left:2600px;top:1170.4px;width:152px;height:50px;overflow:hidden;"><div class="t" style="top:19.68px;font-size:24px;color:#333333;left:0px;left:auto;right:-9px;"><span class="n">0.00</span></div>
</div>
<div class="t" style="top:1250.08px;font-size:24px;color:#333333;left:58px;"><span class="o">1</span>00.074<span class="o">1</span>00.0</div>
<div class="t" style="top:1250.08px;font-size:24px;color:#333333;left:294px;"><span class="sx" style="transform:scaleX(0.78)">S</span></div>
<div class="t" style="top:1250.08px;font-size:24px;color:#2a80b3;left:473px;"><span class="sx" style="transform:scaleX(0.82);letter-spacing:1px">ROOFING</span></div>
<svg style="left:664px;top:1258px" width="28" height="8" viewBox="0 0 28 8"><circle cx="4" cy="4" r="3.2" fill="#808487"/><circle cx="14" cy="4" r="3.2" fill="#808487"/><circle cx="24" cy="4" r="3.2" fill="#808487"/></svg>
<div class="t" style="top:1250.08px;font-size:24px;color:#333333;left:973px;"><span class="n"><span class="o">1</span><span class="o">1</span>,000,00<span class="e">...</span></span></div>
<div class="t" style="top:1250.08px;font-size:24px;color:#333333;right:1524.3px;text-align:right;"><span class="n">0.00</span></div>
<div class="t" style="top:1250.08px;font-size:24px;color:#333333;right:1284.3px;text-align:right;"><span class="n">0.00</span></div>
<div class="t" style="top:1250.08px;font-size:24px;color:#333333;left:1603px;"><span class="n"><span class="o">1</span><span class="o">1</span>,000,00<span class="e">...</span></span></div>
<div class="t" style="top:1250.08px;font-size:24px;color:#333333;right:904.3px;text-align:right;"><span class="n">0.00</span></div>
<div class="t" style="top:1250.08px;font-size:24px;color:#333333;left:1983px;"><span class="n"><span class="o">1</span><span class="o">1</span>,000,00<span class="e">...</span></span></div>
<div class="t" style="top:1250.08px;font-size:24px;color:#333333;right:564.3000000000002px;text-align:right;"><span class="n">0.00</span></div>
<div class="t" style="top:1250.08px;font-size:24px;color:#333333;right:314.3000000000002px;text-align:right;"><span class="n">0.00</span></div>
<div class="r" style="left:2600px;top:1230.4px;width:152px;height:50px;overflow:hidden;"><div class="t" style="top:19.68px;font-size:24px;color:#333333;left:0px;left:auto;right:-9px;"><span class="n">0.00</span></div>
</div>
<div class="t" style="top:1310.08px;font-size:24px;color:#333333;left:58px;"><span class="o">1</span>00.074200.0</div>
<div class="t" style="top:1310.08px;font-size:24px;color:#333333;left:294px;"><span class="sx" style="transform:scaleX(0.78)">S</span></div>
<div class="t" style="top:1310.08px;font-size:24px;color:#2a80b3;left:473px;"><span class="sx" style="transform:scaleX(0.82);letter-spacing:1px">WALL CLADDI<span class="e">...</span></span></div>
<svg style="left:664px;top:1318px" width="28" height="8" viewBox="0 0 28 8"><circle cx="4" cy="4" r="3.2" fill="#808487"/><circle cx="14" cy="4" r="3.2" fill="#808487"/><circle cx="24" cy="4" r="3.2" fill="#808487"/></svg>
<div class="t" style="top:1310.08px;font-size:24px;color:#333333;left:973px;"><span class="n"><span class="o">1</span>2,000,00<span class="e">...</span></span></div>
<div class="t" style="top:1310.08px;font-size:24px;color:#333333;right:1524.3px;text-align:right;"><span class="n">0.00</span></div>
<div class="t" style="top:1310.08px;font-size:24px;color:#333333;right:1284.3px;text-align:right;"><span class="n">0.00</span></div>
<div class="t" style="top:1310.08px;font-size:24px;color:#333333;left:1603px;"><span class="n"><span class="o">1</span>2,000,00<span class="e">...</span></span></div>
<div class="t" style="top:1310.08px;font-size:24px;color:#333333;right:904.3px;text-align:right;"><span class="n">0.00</span></div>
<div class="t" style="top:1310.08px;font-size:24px;color:#333333;left:1983px;"><span class="n"><span class="o">1</span>2,000,00<span class="e">...</span></span></div>
<div class="t" style="top:1310.08px;font-size:24px;color:#333333;right:564.3000000000002px;text-align:right;"><span class="n">0.00</span></div>
<div class="t" style="top:1310.08px;font-size:24px;color:#333333;right:314.3000000000002px;text-align:right;"><span class="n">0.00</span></div>
<div class="r" style="left:2600px;top:1290.4px;width:152px;height:50px;overflow:hidden;"><div class="t" style="top:19.68px;font-size:24px;color:#333333;left:0px;left:auto;right:-9px;"><span class="n">0.00</span></div>
</div>
<svg style="left:1566px;top:681px" width="8" height="8" viewBox="0 0 8 8"><path d="M8,0 V8 H0 Z" fill="#1e90d0"/></svg>
<svg style="left:1944px;top:681px" width="8" height="8" viewBox="0 0 8 8"><path d="M8,0 V8 H0 Z" fill="#1e90d0"/></svg>
<svg style="left:1566px;top:741px" width="8" height="8" viewBox="0 0 8 8"><path d="M8,0 V8 H0 Z" fill="#1e90d0"/></svg>
<svg style="left:1488px;top:689px" width="24" height="36" viewBox="0 0 24 36"><path d="M2,2 V28 L8,22.5 L12.5,33 L16.5,31.2 L12.2,21 H20.5 Z" fill="#111" stroke="#fff" stroke-width="1.6" stroke-linejoin="round"/></svg>
</body></html>
